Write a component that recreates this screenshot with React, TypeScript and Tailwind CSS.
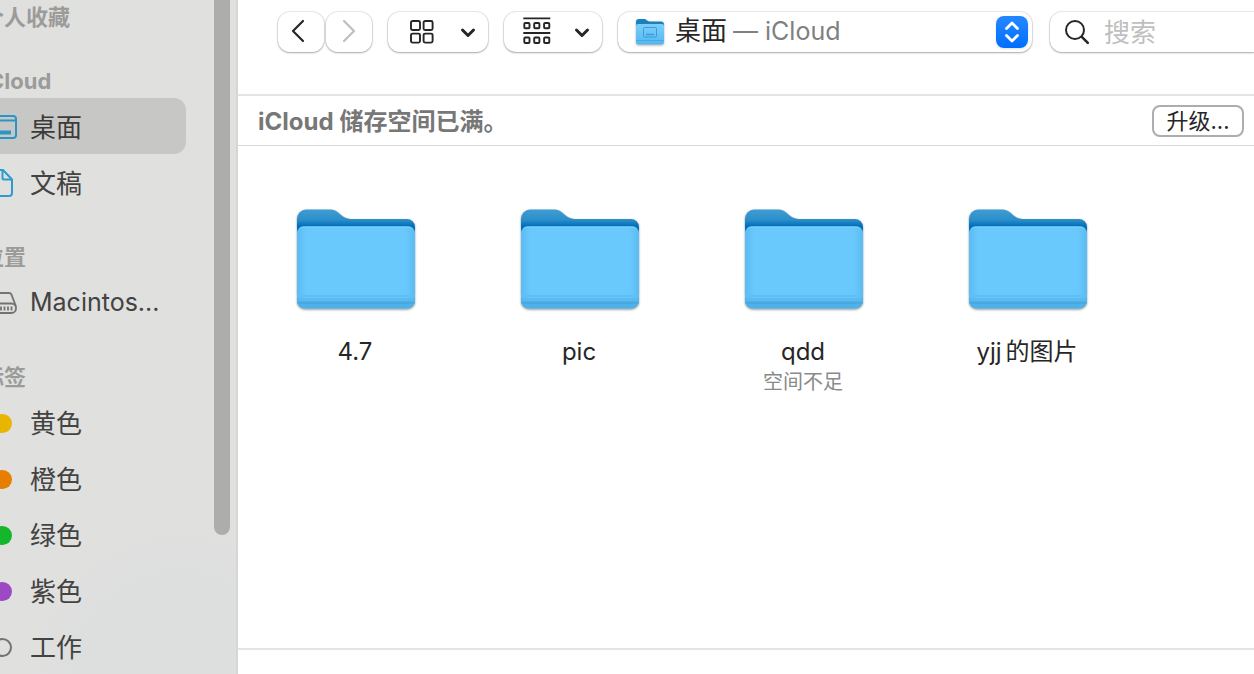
import React from 'react';

interface SidebarItem {
  label: string;
  icon: 'desktop' | 'document' | 'disk' | 'tag';
  tagClass?: string;
  active?: boolean;
}

interface SidebarSection {
  title: string;
  items: SidebarItem[];
}

interface FolderItem {
  id: number;
  latin: string;
  cjk?: string;
  note?: string;
}

const sections: SidebarSection[] = [
  { title: '个人收藏', items: [] },
  {
    title: 'iCloud',
    items: [
      { label: '桌面', icon: 'desktop', active: true },
      { label: '文稿', icon: 'document' }
    ]
  },
  { title: '位置', items: [{ label: 'Macintos...', icon: 'disk' }] },
  {
    title: '标签',
    items: [
      { label: '黄色', icon: 'tag', tagClass: 'bg-[#e8b500]' },
      { label: '橙色', icon: 'tag', tagClass: 'bg-[#e87e00]' },
      { label: '绿色', icon: 'tag', tagClass: 'bg-[#14b62b]' },
      { label: '紫色', icon: 'tag', tagClass: 'bg-[#9d48c4]' },
      { label: '工作', icon: 'tag', tagClass: 'border-2 border-[#737372]' }
    ]
  }
];

const folders: FolderItem[] = [
  { id: 1, latin: '4.7' },
  { id: 2, latin: 'pic' },
  { id: 3, latin: 'qdd', note: '空间不足' },
  { id: 4, latin: 'yjj', cjk: '的图片' }
];

const controlClasses =
  'h-10 rounded-xl bg-white shadow-[0_0_1px_1px_rgba(0,0,0,0.09),0_1px_2px_rgba(0,0,0,0.28)]';

const SidebarIcon: React.FC<{ item: SidebarItem }> = ({ item }) => {
  switch (item.icon) {
    case 'desktop':
      return (
        <svg width="30" height="24" viewBox="0 0 30 24" fill="none" stroke="#2b95c5" strokeWidth="2">
          <rect x="1" y="1" width="28" height="22" rx="3" />
          <path d="M1 5.500h28" />
          <rect x="6" y="15.500" width="18" height="4" fill="#2b95c5" stroke="none" />
        </svg>
      );
    case 'document':
      return (
        <svg width="22" height="28" viewBox="0 0 22 28" fill="none" stroke="#2e9bcd" strokeWidth="2" strokeLinejoin="round">
          <path d="M12 1H4a3 3 0 0 0-3 3v20a3 3 0 0 0 3 3h14a3 3 0 0 0 3-3V10.500z" />
          <path d="M11.500 1v8a1.500 1.500 0 0 0 1.500 1.500h8" />
        </svg>
      );
    case 'disk':
      return (
        <svg width="30" height="22" viewBox="0 0 30 22" fill="none" stroke="#737372" strokeWidth="1.800">
          <path d="M1 14.500 5.500 2.600Q6.200 1 8 1h14q1.800 0 2.500 1.600L29 14.500" />
          <rect x="1" y="11.500" width="28" height="9.500" rx="4.500" />
          <path d="M6 14.500v4M10 14.500v4M14 14.500v4M17.500 14.500v4M21 14.500v4M24.500 14.500v4" />
        </svg>
      );
    default:
      return <span className={`block size-[19px] rounded-full ${item.tagClass}`} />;
  }
};

const ChevronDown: React.FC = () => (
  <svg width="16" height="12" viewBox="0 0 16 12" fill="none" stroke="#262626" strokeWidth="3" strokeLinecap="round" strokeLinejoin="round">
    <path d="m2.500 4 5.500 5.500 5.500-5.500" />
  </svg>
);

const GridIcon: React.FC = () => (
  <svg width="24" height="24" viewBox="0 0 24 24" fill="none" stroke="#262626" strokeWidth="1.900">
    <rect x="1" y="1" width="9" height="9" rx="1.500" />
    <rect x="13.600" y="1" width="9" height="9" rx="1.500" />
    <rect x="1" y="13.600" width="9" height="9" rx="1.500" />
    <rect x="13.600" y="13.600" width="9" height="9" rx="1.500" />
  </svg>
);

const GroupIcon: React.FC = () => (
  <svg width="28" height="30" viewBox="0 0 28 30" fill="none" stroke="#262626" strokeWidth="1.900">
    <path d="M.3 1.400h27M.3 16h27" />
    <rect x="1.300" y="6" width="5.200" height="5.200" rx="1" />
    <rect x="11.200" y="6" width="5.200" height="5.200" rx="1" />
    <rect x="21.100" y="6" width="5.200" height="5.200" rx="1" />
    <rect x="1.300" y="20.500" width="5.200" height="5.500" rx="1" />
    <rect x="11.200" y="20.500" width="5.200" height="5.500" rx="1" />
    <rect x="21.100" y="20.500" width="5.200" height="5.500" rx="1" />
  </svg>
);

const SmallFolderIcon: React.FC = () => (
  <svg width="30" height="28" viewBox="0 0 30 28" className="shrink-0 drop-shadow-[0_1px_1px_rgba(0,0,0,0.3)]">
    <defs>
      <linearGradient id="smallFront" x1="0" y1="0" x2="0" y2="1">
        <stop offset="0" stopColor="#7bcffb" />
        <stop offset="1" stopColor="#53b7f0" />
      </linearGradient>
    </defs>
    <path d="M1 4a3 3 0 0 1 3-3h5.500c2 0 2.500 2.500 5 2.500H26a3 3 0 0 1 3 3V12H1z" fill="#1c80bd" />
    <path d="M1 8a2 2 0 0 1 2-2h24a2 2 0 0 1 2 2v16a2.500 2.500 0 0 1-2.500 2.500h-23A2.500 2.500 0 0 1 1 24z" fill="url(#smallFront)" />
    <path d="M1 22.500h28" stroke="#48a9e2" />
    <rect x="8.500" y="9.500" width="13" height="9.500" rx="1" fill="none" stroke="#3b9cd6" />
    <path d="M11 16.500h8" stroke="#3b9cd6" strokeWidth="1.500" />
  </svg>
);

const FolderIcon: React.FC = () => (
  <svg width="120" height="104" viewBox="0 0 120 104" className="drop-shadow-[0_1px_1px_rgba(0,0,0,0.4)]">
    <defs>
      <linearGradient id="folderBack" x1="0" y1="0" x2="0" y2="1">
        <stop offset="0" stopColor="#3f9dd3" />
        <stop offset="0.350" stopColor="#2c8fcb" />
        <stop offset="0.550" stopColor="#0470bb" />
      </linearGradient>
      <linearGradient id="folderFront" x1="0" y1="0" x2="1" y2="0">
        <stop offset="0" stopColor="#5bbcf2" />
        <stop offset="0.080" stopColor="#69c8fc" />
        <stop offset="0.920" stopColor="#69c8fc" />
        <stop offset="1" stopColor="#5bbcf2" />
      </linearGradient>
    </defs>
    <path d="M1 9.500a9 9 0 0 1 9-9h25c8 0 10 9.500 20 9.500h56a8 8 0 0 1 8 8V30H1z" fill="url(#folderBack)" />
    <path d="M1 24a6.500 6.500 0 0 1 6.500-6.500h105a6.500 6.500 0 0 1 6.500 6.500v67.500a8 8 0 0 1-8 8H9a8 8 0 0 1-8-8z" fill="url(#folderFront)" />
    <path d="M3.500 19.500A6 6 0 0 1 8 18h104a6 6 0 0 1 4.500 1.500" fill="none" stroke="#85d4fd" />
    <path d="M1 87h118" stroke="#5fbef3" strokeWidth="2" />
    <path d="M1 90h118" stroke="#58b6ec" strokeWidth="1.500" />
    <path d="M1 91.500h118a8 8 0 0 1-8 8H9a8 8 0 0 1-8-8z" fill="#50b1e9" />
    <path d="M1.500 94h117" stroke="#439fd7" />
  </svg>
);

const Sidebar: React.FC = () => (
  <aside className="flex w-[238px] shrink-0 items-start overflow-hidden border-r-2 border-[#d6d6d8] bg-[#e0e0df] bg-[radial-gradient(circle_at_180px_680px,#dcdfde_60px,#dddfde_110px,transparent_150px)] pr-1.5">
    <nav className="-mt-0.5 mr-7 -ml-9 flex min-w-0 flex-1 flex-col gap-7">
      {sections.map((section) => (
        <section key={section.title}>
          <h2 className="flex h-9 items-center pt-0.5 pl-[18px] text-[22px] leading-8 font-bold text-[#9b9b9a]">
            {section.title}
          </h2>
          {section.items.map((item) => (
            <a
              key={item.label}
              href="#"
              className={`flex h-14 items-center gap-[13px] rounded-xl pt-0.5 pl-[23px] whitespace-nowrap ${
                item.icon === 'disk' ? 'text-[25px]' : 'text-[26px]'
              } ${item.active ? 'bg-[#c7c7c6] text-[#3b3b3a]' : 'text-[#434342]'}`}
            >
              <span className="flex w-[30px] shrink-0 justify-center">
                <SidebarIcon item={item} />
              </span>
              {item.label}
            </a>
          ))}
        </section>
      ))}
    </nav>
    <div className="h-[535px] w-4 shrink-0 rounded-b-full bg-[#adadac]" />
  </aside>
);

const Toolbar: React.FC = () => (
  <header className="flex h-24 shrink-0 items-start gap-4 border-b-2 border-[#e4e4e4] pt-3 pl-10">
    <div className="flex shrink-0 gap-0.5">
      <button type="button" aria-label="后退" className={`${controlClasses} flex w-[46px] items-center justify-center pr-1.5 pb-0.5`}>
        <svg width="14" height="24" viewBox="0 0 14 24" fill="none" stroke="#262626" strokeWidth="2.200" strokeLinecap="round" strokeLinejoin="round">
          <path d="M12 2 2 12l10 10" />
        </svg>
      </button>
      <button type="button" aria-label="前进" disabled className={`${controlClasses} flex w-[46px] items-center justify-center pb-0.5`}>
        <svg width="14" height="24" viewBox="0 0 14 24" fill="none" stroke="#bebebe" strokeWidth="2.200" strokeLinecap="round" strokeLinejoin="round">
          <path d="m2 2 10 10L2 22" />
        </svg>
      </button>
    </div>
    <button type="button" aria-label="显示方式" className={`${controlClasses} flex w-[100px] shrink-0 items-center justify-between pr-3 pl-[22px]`}>
      <GridIcon />
      <ChevronDown />
    </button>
    <button type="button" aria-label="分组方式" className={`${controlClasses} flex w-[98px] shrink-0 items-center justify-between pr-3 pl-[19px]`}>
      <GroupIcon />
      <ChevronDown />
    </button>
    <button
      type="button"
      aria-haspopup="listbox"
      className={`${controlClasses} flex min-w-0 flex-1 items-center pr-1 pl-[17px] text-left whitespace-nowrap text-[#262626]`}
    >
      <SmallFolderIcon />
      <span className="flex min-w-0 flex-1 items-baseline gap-1.5 pb-0.5 pl-2.5 text-[26px]">
        <span>桌面</span>
        <span className="truncate text-[25px] text-[#808080]">— iCloud</span>
      </span>
      <span className="flex size-8 shrink-0 items-center justify-center rounded-lg bg-linear-to-b from-[#2388ff] to-[#006dff] shadow-sm">
        <svg width="16" height="24" viewBox="0 0 16 24" fill="none" stroke="white" strokeWidth="2.800" strokeLinecap="round" strokeLinejoin="round">
          <path d="m2.500 8.500 5.500-5.500 5.500 5.500M2.500 15.500 8 21l5.500-5.500" />
        </svg>
      </span>
    </button>
    <label className={`${controlClasses} ml-0.5 flex w-[204px] shrink-0 items-center gap-3.5 rounded-r-none pl-3.5`}>
      <svg width="26" height="26" viewBox="0 0 26 26" fill="none" stroke="#262626" strokeLinecap="round" className="shrink-0">
        <circle cx="11" cy="11" r="9" strokeWidth="2" />
        <path d="m17.800 17.800 6 6" strokeWidth="2.600" />
      </svg>
      <input
        type="search"
        aria-label="搜索"
        placeholder="搜索"
        className="h-10 w-full min-w-0 bg-transparent text-[26px] outline-none placeholder:text-[#bfbfbf]"
      />
    </label>
  </header>
);

const App: React.FC = () => {
  return (
    <div className="flex h-screen overflow-hidden bg-white font-[Inter,'Noto_Sans_CJK_SC',sans-serif]">
      <Sidebar />
      <main className="flex min-w-0 flex-1 flex-col">
        <Toolbar />
        <div className="flex h-[50px] shrink-0 items-center justify-between border-b border-[#d9d9d9] pr-2.5 pl-5">
          <p className="flex gap-1.5 pt-0.5 text-2xl font-bold text-[#777777]">
            <span>iCloud</span>
            <span>储存空间已满。</span>
          </p>
          <button
            type="button"
            className="h-8 w-[92px] rounded-lg border-2 border-[#adadad] bg-white text-[22px] leading-7 text-[#262626]"
          >
            升级...
          </button>
        </div>
        <ul className="grid flex-1 grid-cols-[repeat(auto-fill,224px)] content-start pt-[63px] pl-1.5">
          {folders.map((folder) => (
            <li key={folder.id} className="flex flex-col items-center">
              <FolderIcon />
              <div className="flex flex-col items-center pt-[23px] pr-0.5">
                <p className="flex gap-1 text-2xl leading-8 text-[#262626]">
                  <span>{folder.latin}</span>
                  {folder.cjk && <span>{folder.cjk}</span>}
                </p>
                {folder.note && <p className="text-xl leading-7 text-[#8a8a8a]">{folder.note}</p>}
              </div>
            </li>
          ))}
        </ul>
        <footer className="h-[26px] shrink-0 border-t-2 border-[#e4e4e4]" />
      </main>
    </div>
  );
};

export default App;
